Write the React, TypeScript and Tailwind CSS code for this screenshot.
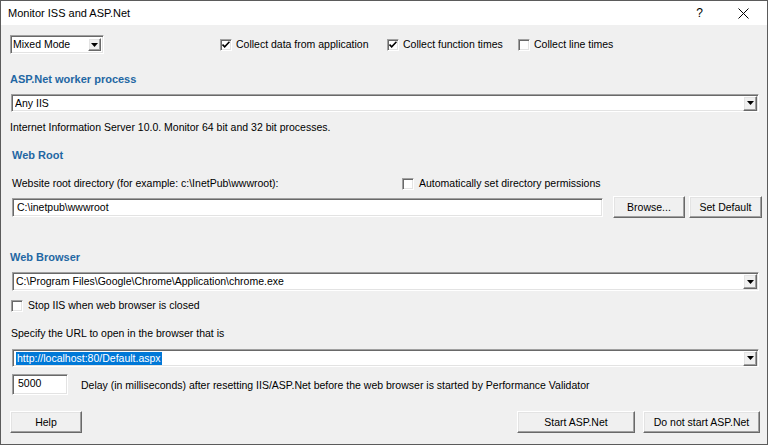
import React from "react";

const sunken =
  "border border-t-[#a0a0a0] border-l-[#a0a0a0] border-r-white border-b-white shadow-[inset_1px_1px_0_#696969,inset_-1px_-1px_0_#e3e3e3] bg-white";
const raised =
  "border border-t-white border-l-white border-r-[#696969] border-b-[#696969] shadow-[inset_-1px_-1px_0_#a0a0a0,inset_1px_1px_0_#e3e3e3] bg-[#f0f0f0]";

function Arrow() {
  return (
    <svg width="7" height="4" viewBox="0 0 7 4">
      <path d="M0 0h7L3.5 4z" fill="#000" />
    </svg>
  );
}

function DropButton({ size = "w-[14px] h-[15px]" }: { size?: string }) {
  return (
    <div className={`${raised} ${size} flex items-center justify-center shrink-0`}>
      <Arrow />
    </div>
  );
}

function Check({ checked = false }: { checked?: boolean }) {
  return (
    <div className={`${sunken} w-[12px] h-[12px] shrink-0 flex items-center justify-center`}>
      {checked && (
        <svg width="8" height="8" viewBox="0 0 8 8">
          <path d="M0.5 3.5l2.2 2.4 4.8-5.2" stroke="#000" strokeWidth="1.6" fill="none" />
        </svg>
      )}
    </div>
  );
}

function Combo({
  children,
  className = "",
}: {
  children: React.ReactNode;
  className?: string;
}) {
  return (
    <div className={`${sunken} flex items-center pl-[3px] pr-[1px] ${className}`}>
      <div className="flex-1 truncate">{children}</div>
      <DropButton />
    </div>
  );
}

function Heading({ children, className = "" }: { children: React.ReactNode; className?: string }) {
  return (
    <div className={`font-bold text-[11px] leading-[13px] text-[#1f67a3] ${className}`}>
      {children}
    </div>
  );
}

function Button({ children, className = "" }: { children: React.ReactNode; className?: string }) {
  return (
    <div className={`${raised} h-[22px] flex items-center justify-center ${className}`}>
      {children}
    </div>
  );
}

export default function App() {
  return (
    <div className="w-[768px] h-[445px] border border-[#5b5b5b] bg-[#f0f0f0] flex flex-col font-['Liberation_Sans',Arial,sans-serif] text-[10.5px] leading-[13px] text-black overflow-hidden">
      {/* Title bar */}
      <div className="h-[24px] bg-white flex items-center pl-[7px] shrink-0 text-[11px]">
        <span>Monitor ISS and ASP.Net</span>
        <span className="ml-auto text-[12px] mr-[35px]">?</span>
        <svg width="11" height="11" viewBox="0 0 11 11" className="mr-[18px]">
          <path d="M0.5 0.5l10 10M10.5 0.5l-10 10" stroke="#000" strokeWidth="1" />
        </svg>
      </div>

      {/* Body */}
      <div className="flex flex-col pl-[9px] pr-[5px]">
        {/* Mode + collection options */}
        <div className="flex items-center mt-[10px]">
          <div className={`${sunken} w-[94px] h-[19px] flex items-center pl-[2px] pr-[2px]`}>
            <div className="flex-1">Mixed Mode</div>
            <DropButton size="w-[13px] h-[13px]" />
          </div>
          <div className="ml-[116px] w-[167px] flex items-center gap-[4px]">
            <Check checked />
            <span>Collect data from application</span>
          </div>
          <div className="w-[131px] flex items-center gap-[4px]">
            <Check checked />
            <span>Collect function times</span>
          </div>
          <div className="flex items-center gap-[4px]">
            <Check />
            <span>Collect line times</span>
          </div>
        </div>

        <Heading className="mt-[19px]">ASP.Net worker process</Heading>
        <Combo className="mt-[8px] h-[18px] ml-[1px] mr-[3px]">Any IIS</Combo>
        <div className="mt-[9px]">
          Internet Information Server 10.0. Monitor 64 bit and 32 bit processes.
        </div>

        <Heading className="mt-[15px] ml-[2px]">Web Root</Heading>
        <div className="mt-[15px] flex items-center ml-[2px]">
          <span className="w-[390px]">Website root directory (for example: c:\InetPub\wwwroot):</span>
          <Check />
          <span className="ml-[5px]">Automatically set directory permissions</span>
        </div>
        <div className="mt-[6px] flex items-center h-[22px]">
          <div className={`${sunken} flex-1 h-[19px] ml-[2px] flex items-center pl-[4px]`}>
            C:\inetpub\wwwroot
          </div>
          <Button className="w-[72px] ml-[10px]">Browse...</Button>
          <Button className="w-[73px] ml-[4px]">Set Default</Button>
        </div>

        <Heading className="mt-[33px]">Web Browser</Heading>
        <Combo className="mt-[8px] h-[19px] ml-[2px] mr-[3px]">
          C:\Program Files\Google\Chrome\Application\chrome.exe
        </Combo>
        <div className="mt-[8px] flex items-center ml-[1px]">
          <Check />
          <span className="ml-[5px]">Stop IIS when web browser is closed</span>
        </div>
        <div className="mt-[15px] ml-[1px]">Specify the URL to open in the browser that is</div>
        <Combo className="mt-[9px] h-[18px] ml-[2px] mr-[3px]">
          <span className="bg-[#0078d7] text-white px-[1px] py-[1px]">http://localhost:80/Default.aspx</span>
        </Combo>
        <div className="mt-[7px] flex items-center ml-[2px]">
          <div className={`${sunken} w-[56px] h-[21px] flex items-center pl-[5px] pb-[2px]`}>5000</div>
          <span className="ml-[13px] mt-[2px]">
            Delay (in milliseconds) after resetting IIS/ASP.Net before the web browser is started by Performance Validator
          </span>
        </div>

        <div className="mt-[16px] flex items-center">
          <Button className="w-[72px]">Help</Button>
          <Button className="w-[118px] ml-auto">Start ASP.Net</Button>
          <Button className="w-[117px] ml-[8px] mr-[2px]">Do not start ASP.Net</Button>
        </div>
      </div>
    </div>
  );
}
